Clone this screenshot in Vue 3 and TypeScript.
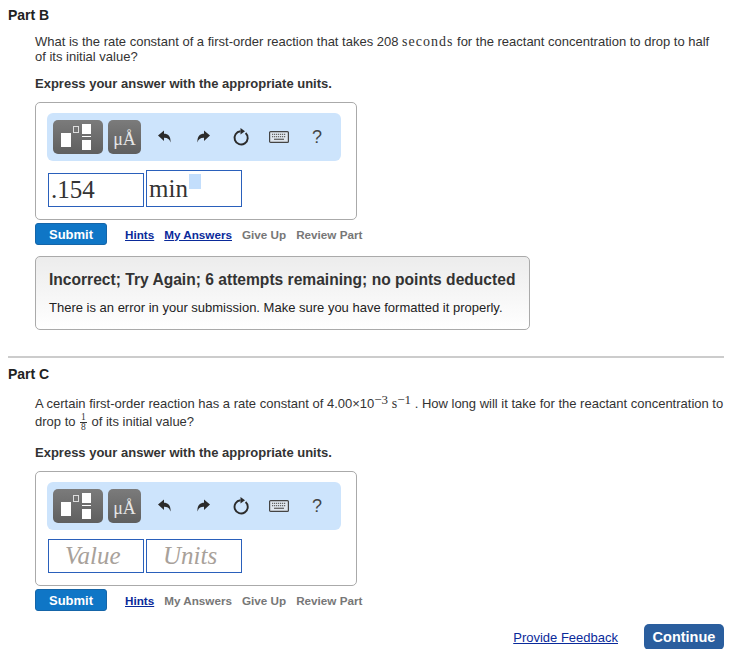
<script setup lang="ts">
interface ToolIcon { name: string }
const tools: ToolIcon[] = [{ name: 'undo' }, { name: 'redo' }, { name: 'reset' }, { name: 'keyboard' }, { name: 'help' }]
</script>

<template>
  <div class="page">
    <section class="part part-b">
      <h2 class="part-title">Part B</h2>
      <div class="body">
        <p class="question q-b">What is the rate constant of a first-order reaction that takes 208 <span class="serif">seconds</span> for the reactant concentration to drop to half of its initial value?</p>
        <p class="express">Express your answer with the appropriate units.</p>
        <div class="answer">
          <div class="toolbar">
            <div class="tbtn tmpl">
              <span class="sq big"></span><span class="sq small"></span>
              <span class="frac"><span class="sq f"></span><span class="bar"></span><span class="sq f"></span></span>
            </div>
            <div class="tbtn unit">μÅ</div>
            <div class="icons">
              <span v-for="t in tools" :key="t.name" class="ic">
                <svg v-if="t.name === 'undo'" width="16" height="16" viewBox="0 0 16 16"><path d="M1 6.500 7 1.500v3.200c4 0 7 2.300 6.500 8.800-.8-3.300-3-4.800-6.500-4.700v3.200z" fill="#2b2b2b"/></svg>
                <svg v-else-if="t.name === 'redo'" width="16" height="16" viewBox="0 0 16 16"><path d="M15 6.500 9 1.500v3.200c-4 0-7 2.300-6.500 8.800.8-3.300 3-4.800 6.500-4.700v3.200z" fill="#2b2b2b"/></svg>
                <svg v-else-if="t.name === 'reset'" width="18" height="20" viewBox="0 0 18 20"><path d="M8.500 4.300A6.600 6.600 0 1 0 13.600 6" fill="none" stroke="#2b2b2b" stroke-width="1.900"/><path d="M8.500 1 13 4.300 8.500 7.600z" fill="#2b2b2b"/></svg>
                <svg v-else-if="t.name === 'keyboard'" width="20" height="12" viewBox="0 0 20 12"><rect x=".6" y=".6" width="18.800" height="10.800" rx="1" fill="#dfe6ee" stroke="#444" stroke-width="1.200"/><path d="M3 3.300h14M3 5.600h14" stroke="#666" stroke-width="1.200" stroke-dasharray="1.200 .8"/><path d="M5 8.300h10" stroke="#666" stroke-width="1.300"/></svg>
                <span v-else class="help">?</span>
              </span>
            </div>
          </div>
          <div class="inputs">
            <div class="inp val">.154</div>
            <div class="inp tall">min<span class="cursor"></span></div>
          </div>
        </div>
        <div class="actions">
          <button class="submit">Submit</button>
          <div class="links">
            <a class="lnk">Hints</a><a class="lnk">My Answers</a><span class="off">Give Up</span><span class="off">Review Part</span>
          </div>
        </div>
        <div class="feedback">
          <div class="fb-title">Incorrect; Try Again; 6 attempts remaining; no points deducted</div>
          <div class="fb-text">There is an error in your submission. Make sure you have formatted it properly.</div>
        </div>
      </div>
    </section>
    <hr class="rule" />
    <section class="part part-c">
      <h2 class="part-title">Part C</h2>
      <div class="body">
        <p class="question q-c">A certain first-order reaction has a rate constant of 4.00×10<sup class="sup">−3</sup> <span class="serif s">s</span><sup class="sup">−1</sup> . How long will it take for the reactant concentration to drop to <span class="mfrac"><span class="num">1</span><span class="den">8</span></span> of its initial value?</p>
        <p class="express express-c">Express your answer with the appropriate units.</p>
        <div class="answer">
          <div class="toolbar">
            <div class="tbtn tmpl">
              <span class="sq big"></span><span class="sq small"></span>
              <span class="frac"><span class="sq f"></span><span class="bar"></span><span class="sq f"></span></span>
            </div>
            <div class="tbtn unit">μÅ</div>
            <div class="icons">
              <span v-for="t in tools" :key="t.name" class="ic">
                <svg v-if="t.name === 'undo'" width="16" height="16" viewBox="0 0 16 16"><path d="M1 6.500 7 1.500v3.200c4 0 7 2.300 6.500 8.800-.8-3.300-3-4.800-6.500-4.700v3.200z" fill="#2b2b2b"/></svg>
                <svg v-else-if="t.name === 'redo'" width="16" height="16" viewBox="0 0 16 16"><path d="M15 6.500 9 1.500v3.200c-4 0-7 2.300-6.500 8.800.8-3.300 3-4.800 6.500-4.700v3.200z" fill="#2b2b2b"/></svg>
                <svg v-else-if="t.name === 'reset'" width="18" height="20" viewBox="0 0 18 20"><path d="M8.500 4.300A6.600 6.600 0 1 0 13.600 6" fill="none" stroke="#2b2b2b" stroke-width="1.900"/><path d="M8.500 1 13 4.300 8.500 7.600z" fill="#2b2b2b"/></svg>
                <svg v-else-if="t.name === 'keyboard'" width="20" height="12" viewBox="0 0 20 12"><rect x=".6" y=".6" width="18.800" height="10.800" rx="1" fill="#dfe6ee" stroke="#444" stroke-width="1.200"/><path d="M3 3.300h14M3 5.600h14" stroke="#666" stroke-width="1.200" stroke-dasharray="1.200 .8"/><path d="M5 8.300h10" stroke="#666" stroke-width="1.300"/></svg>
                <span v-else class="help">?</span>
              </span>
            </div>
          </div>
          <div class="inputs">
            <div class="inp ph">Value</div>
            <div class="inp ph">Units</div>
          </div>
        </div>
        <div class="actions">
          <button class="submit">Submit</button>
          <div class="links">
            <a class="lnk">Hints</a><span class="off">My Answers</span><span class="off">Give Up</span><span class="off">Review Part</span>
          </div>
        </div>
      </div>
    </section>
    <footer class="foot">
      <a class="feedback-link">Provide Feedback</a>
      <button class="continue">Continue</button>
    </footer>
  </div>
</template>

<style scoped>
.page {
  width: 729px;
  height: 649px;
  overflow: hidden;
  box-sizing: border-box;
  padding: 8px 5px 0 8px;
  background: #fff;
  font-family: "Liberation Sans", Arial, sans-serif;
  color: #333;
}
.part-title { margin: 0; font-size: 14px; line-height: 15px; font-weight: bold; color: #222; }
.body { padding-left: 27px; }
.question { margin: 11px 0 0; font-size: 13px; line-height: 15px; color: #333; }
.q-b { max-width: 680px; }
.serif { font-family: "Liberation Serif", serif; font-size: 14px; letter-spacing: 1px; }
.s { letter-spacing: 0; }
.express { margin: 12px 0 0; font-size: 13px; line-height: 15px; font-weight: bold; color: #333; }
.answer {
  box-sizing: border-box;
  width: 322px;
  margin-top: 11px;
  padding: 10px 15px 12px 11px;
  border: 1px solid #aaa;
  border-radius: 5px;
}
.toolbar {
  display: flex;
  align-items: center;
  height: 48px;
  box-sizing: border-box;
  padding-left: 6px;
  background: #cde4fc;
  border-radius: 6px;
}
.tbtn {
  height: 34px;
  box-sizing: border-box;
  border-radius: 5px;
  background: linear-gradient(#7b7b7b, #5f5f5f);
  position: relative;
}
.tmpl { width: 50px; }
.unit {
  width: 33px;
  margin-left: 5px;
  color: #e6e6e6;
  font-family: "Liberation Serif", serif;
  font-size: 18px;
  line-height: 38px;
  text-align: center;
}
.sq { position: absolute; background: #fff; }
.big { left: 8px; top: 13px; width: 10px; height: 14px; }
.small { left: 20px; top: 6px; width: 6px; height: 7px; background: transparent; border: 1px solid #ddd; box-sizing: border-box; }
.frac { position: absolute; left: 29px; top: 4px; width: 9px; }
.frac .f { position: static; display: block; width: 9px; height: 10px; }
.frac .bar { display: block; height: 1px; margin: 2px 0 3px; background: #fff; }
.icons { display: flex; align-items: center; margin-left: 5px; }
.ic { width: 38px; display: flex; justify-content: center; align-items: center; }
.help { font-size: 18px; color: #444; line-height: 18px; }
.inputs { display: flex; align-items: flex-end; gap: 2px; margin: 9px 0 0 1px; }
.inp {
  box-sizing: border-box;
  width: 96px;
  height: 34px;
  border: 1px solid #2a60bb;
  padding-left: 2px;
  font-family: "Liberation Serif", serif;
  font-size: 25px;
  line-height: 31px;
  color: #333;
  position: relative;
}
.tall { height: 37px; line-height: 36px; }
.cursor { position: absolute; left: 42px; top: 3px; width: 12px; height: 15px; background: #c3defc; }
.ph { font-style: italic; color: #a8a19a; padding-left: 16px; }
.actions { display: flex; align-items: center; margin-top: 3px; }
.submit {
  width: 72px;
  height: 22px;
  padding: 0;
  border: 1px solid #1565a8;
  border-radius: 3px;
  background: #0f76c6;
  color: #fff;
  font: bold 13px "Liberation Sans", Arial, sans-serif;
}
.links { display: flex; margin-left: 18px; font-size: 11.700px; font-weight: bold; gap: 10px; }
.lnk { color: #0a2a9a; text-decoration: underline; }
.off { color: #777; }
.feedback {
  box-sizing: border-box;
  width: 495px;
  height: 74px;
  margin-top: 11px;
  padding: 14px 13px 0;
  border: 1px solid #aaa;
  border-radius: 5px;
  background: linear-gradient(#ececec, #fff);
}
.fb-title { font-size: 15.600px; line-height: 18px; font-weight: bold; color: #333; white-space: nowrap; }
.fb-text { margin-top: 11px; font-size: 13px; line-height: 15px; color: #222; }
.rule { margin: 26px 0 0; width: 716px; height: 2px; border: 0; background: #ccc; }
.part-c { margin-top: 9px; }
.q-c { margin-top: 11px; line-height: 18px; }
.sup { font-size: 13px; line-height: 13px; vertical-align: 4px; font-family: "Liberation Serif", serif; }
.mfrac { display: inline-flex; flex-direction: column; vertical-align: middle; font-size: 9.500px; line-height: 9px; text-align: center; font-family: "Liberation Serif", serif; margin: 0 1px; }
.num { border-bottom: 1px solid #333; padding: 0 1px; }
.express-c { margin-top: 13px; }
.foot {
  display: flex;
  justify-content: flex-end;
  align-items: center;
  gap: 26px;
  margin-top: 13px;
}
.feedback-link { color: #0a2a9a; text-decoration: underline; font-size: 13px; }
.continue {
  flex: none;
  width: 80px;
  height: 26px;
  padding: 0;
  border: 0;
  border-radius: 5px;
  background: #2a5e9e;
  color: #fff;
  font: bold 14.500px "Liberation Sans", Arial, sans-serif;
}
</style>
